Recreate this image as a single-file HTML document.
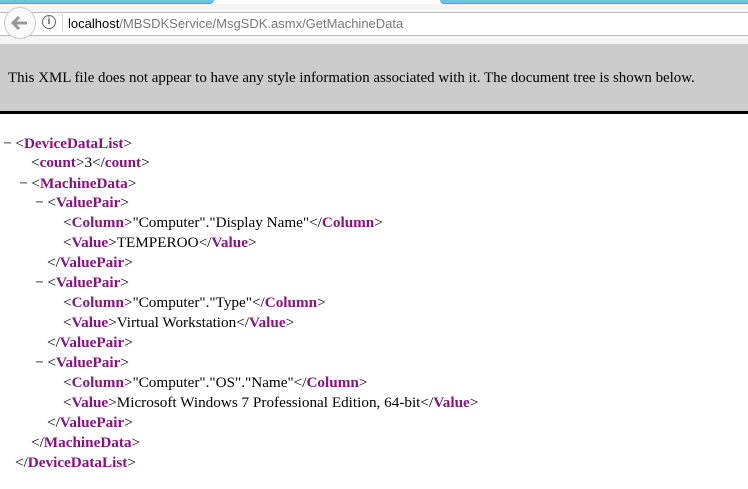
<!DOCTYPE html>
<html><head><style>
body{margin:0;width:748px;height:489px;overflow:hidden;background:#fff;font-family:"Liberation Serif",serif;font-size:15.2px;position:relative}
.tab{position:absolute;top:0;height:3px;background:#6cc3e6;border-bottom:1px solid #4aa6cc}
.tb{position:absolute;top:4px;left:0;width:748px;height:40px;background:#f5f5f5}
.url{position:absolute;top:12px;left:0;width:748px;height:22px;background:#fff;border-top:1px solid #bbb;border-bottom:1px solid #bbb}
.back{position:absolute;top:7px;left:4px;width:30px;height:30px;border:1px solid #ccc;border-radius:50%;background:#fafafa}
.info{position:absolute;top:15px;left:42px;width:12px;height:12px;border:1px solid #666;border-radius:50%;font:bold 10px "Liberation Sans",sans-serif;text-align:center;line-height:12px;color:#555}
.sep{position:absolute;top:14px;left:62px;width:1px;height:18px;background:#ccc}
.u{position:absolute;top:16px;left:68px;font:13px "Liberation Sans",sans-serif;color:#777}
.u b{font-weight:normal;color:#000}
.gray{position:absolute;top:44px;left:0;width:748px;height:67px;background:#ccc;border-bottom:3px solid #000}
.gray p{margin:0;position:absolute;top:26px;left:8px;white-space:nowrap;font-size:14.9px}
.l{position:absolute;white-space:nowrap;line-height:20px}
.t{color:#881280;font-weight:bold}
</style></head><body>
<div class="tab" style="left:0;width:214px;border-radius:0 0 8px 0"></div>
<div class="tab" style="left:440px;width:308px;border-radius:0 0 0 8px"></div>
<div class="tb"></div><div class="url"></div>
<div class="back"><svg width="30" height="30"><path d="M22 15H9M14 9L8 15L14 21" stroke="#999" stroke-width="3" fill="none"/></svg></div>
<div class="info">i</div><div class="sep"></div>
<div class="u"><b>localhost</b>/MBSDKService/MsgSDK.asmx/GetMachineData</div>
<div class="gray"><p>This XML file does not appear to have any style information associated with it. The document tree is shown below.</p></div>
<div class="l" style="top:134px;left:3px">−&nbsp;&lt;<span class="t">DeviceDataList</span>&gt;</div>
<div class="l" style="top:153px;left:31px">&lt;<span class="t">count</span>&gt;3&lt;/<span class="t">count</span>&gt;</div>
<div class="l" style="top:174px;left:19px">−&nbsp;&lt;<span class="t">MachineData</span>&gt;</div>
<div class="l" style="top:193px;left:35px">−&nbsp;&lt;<span class="t">ValuePair</span>&gt;</div>
<div class="l" style="top:213px;left:63px">&lt;<span class="t">Column</span>&gt;"Computer"."Display Name"&lt;/<span class="t">Column</span>&gt;</div>
<div class="l" style="top:233px;left:63px">&lt;<span class="t">Value</span>&gt;TEMPEROO&lt;/<span class="t">Value</span>&gt;</div>
<div class="l" style="top:253px;left:47px">&lt;/<span class="t">ValuePair</span>&gt;</div>
<div class="l" style="top:273px;left:35px">−&nbsp;&lt;<span class="t">ValuePair</span>&gt;</div>
<div class="l" style="top:293px;left:63px">&lt;<span class="t">Column</span>&gt;"Computer"."Type"&lt;/<span class="t">Column</span>&gt;</div>
<div class="l" style="top:313px;left:63px">&lt;<span class="t">Value</span>&gt;Virtual Workstation&lt;/<span class="t">Value</span>&gt;</div>
<div class="l" style="top:333px;left:47px">&lt;/<span class="t">ValuePair</span>&gt;</div>
<div class="l" style="top:353px;left:35px">−&nbsp;&lt;<span class="t">ValuePair</span>&gt;</div>
<div class="l" style="top:373px;left:63px">&lt;<span class="t">Column</span>&gt;"Computer"."OS"."Name"&lt;/<span class="t">Column</span>&gt;</div>
<div class="l" style="top:393px;left:63px">&lt;<span class="t">Value</span>&gt;Microsoft Windows 7 Professional Edition, 64-bit&lt;/<span class="t">Value</span>&gt;</div>
<div class="l" style="top:413px;left:47px">&lt;/<span class="t">ValuePair</span>&gt;</div>
<div class="l" style="top:433px;left:31px">&lt;/<span class="t">MachineData</span>&gt;</div>
<div class="l" style="top:453px;left:15px">&lt;/<span class="t">DeviceDataList</span>&gt;</div>
</body></html>
